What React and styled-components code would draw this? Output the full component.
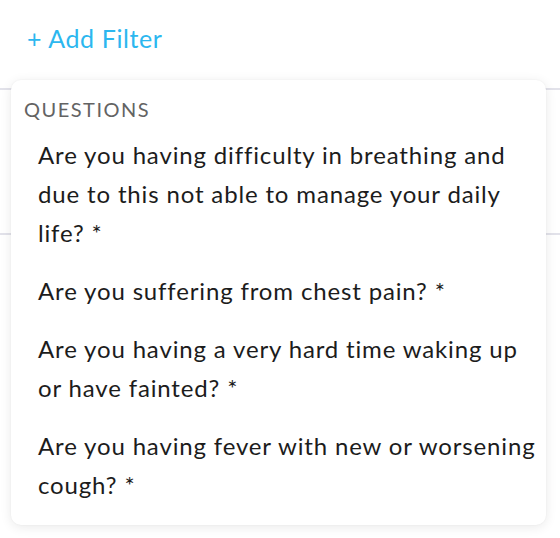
import React from "react";
import styled, { createGlobalStyle } from "styled-components";

const Global = createGlobalStyle`
  html, body { margin: 0; padding: 0; background: #ffffff; }
  body { font-family: "Lato", "Noto Sans", sans-serif; -webkit-font-smoothing: antialiased; }
`;

const Page = styled.div`
  position: relative;
  width: 560px;
  height: 538px;
  overflow: hidden;
  background: #fff;
`;

const Header = styled.div`
  height: 90px;
  box-sizing: border-box;
  padding: 22px 0 0 27px;
  border-bottom: 2px solid #e2e2ea;
`;

const AddFilter = styled.button`
  border: 0;
  background: none;
  padding: 0;
  font-family: inherit;
  font-size: 25px;
  line-height: 32px;
  letter-spacing: 0.6px;
  color: #2cb7ef;
  cursor: pointer;
`;

const Row = styled.div`
  height: 143px;
  border-bottom: 2px solid #e2e2ea;
`;

const Menu = styled.div`
  position: absolute;
  top: 80px;
  left: 11px;
  width: 535px;
  height: 445px;
  box-sizing: border-box;
  background: #fff;
  border-radius: 10px;
  box-shadow: 0 2px 12px rgba(0, 0, 0, 0.09), 0 0 2px rgba(0, 0, 0, 0.05);
  padding: 15px 6px 0 13px;
`;

const GroupLabel = styled.div`
  font-size: 20px;
  line-height: 28px;
  color: #636363;
  letter-spacing: 1.5px;
  margin-bottom: 12px;
`;

const List = styled.ul`
  list-style: none;
  margin: 0;
  padding: 0 0 0 14px;
  display: flex;
  flex-direction: column;
  gap: 19px;
`;

const Item = styled.li`
  font-size: 24px;
  line-height: 39px;
  color: #1c1c1c;
  letter-spacing: 0.85px;
`;

const questions = [
  "Are you having difficulty in breathing and due to this not able to manage your daily life? *",
  "Are you suffering from chest pain? *",
  "Are you having a very hard time waking up or have fainted? *",
  "Are you having fever with new or worsening cough? *",
];

export default function App() {
  return (
    <Page>
      <Global />
      <Header>
        <AddFilter>+ Add Filter</AddFilter>
      </Header>
      <Row />
      <Menu>
        <GroupLabel>QUESTIONS</GroupLabel>
        <List>
          {questions.map((q) => (
            <Item key={q}>{q}</Item>
          ))}
        </List>
      </Menu>
    </Page>
  );
}
